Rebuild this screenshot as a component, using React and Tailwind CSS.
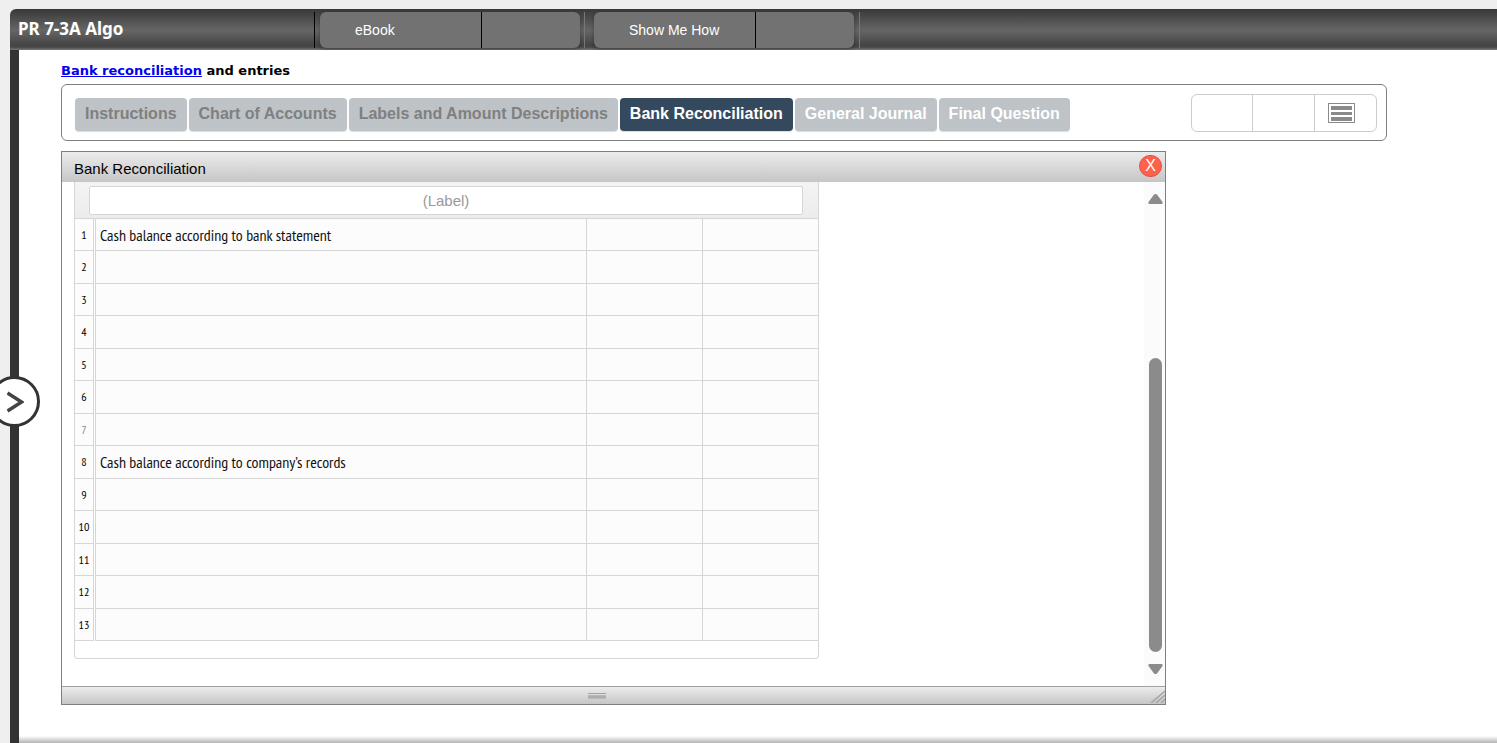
import React from "react";

const tabs = [
  { label: "Instructions", tone: "visited" },
  { label: "Chart of Accounts", tone: "visited" },
  { label: "Labels and Amount Descriptions", tone: "visited" },
  { label: "Bank Reconciliation", tone: "active" },
  { label: "General Journal", tone: "idle" },
  { label: "Final Question", tone: "idle" },
];

const tabTones = {
  visited: "bg-[#bdc3c7] text-[#7f8080]",
  active: "bg-[#34495e] text-white",
  idle: "bg-[#bdc3c7] text-white",
};

const rowText = {
  1: "Cash balance according to bank statement",
  8: "Cash balance according to company’s records",
};

const rows = Array.from({ length: 13 }, (_, i) => i + 1);

function HeaderButton({ label }) {
  return (
    <div className="flex h-9 w-[260px] overflow-hidden rounded-md bg-[#727272] shadow-[0_2px_4px_rgba(0,0,0,0.3)]">
      <button type="button" className="w-[161px] pl-[35px] text-left text-sm text-white">
        {label}
      </button>
      <span className="flex-1 border-l border-black" />
    </div>
  );
}

function TopBar() {
  return (
    <header className="ml-[10px] flex h-[41px] items-start rounded-tl-md bg-[linear-gradient(to_bottom,#383838_0%,#666666_52%,#444444_88%,#484848_93%,#777777_100%)] pt-[3px]">
      <h1 className="w-[304px] pl-2 font-['Noto_Sans',sans-serif] text-[17px] leading-[34px] font-bold text-white">
        PR 7-3A Algo
      </h1>
      <div className="flex h-9 border-l border-black pl-[5px]">
        <HeaderButton label="eBook" />
      </div>
      <div className="ml-1 flex h-9 border-x border-[#777777] pr-[5px] pl-[9px]">
        <HeaderButton label="Show Me How" />
      </div>
    </header>
  );
}

function ListIcon() {
  return (
    <svg width="28" height="22" viewBox="0 0 28 22" aria-hidden="true">
      <rect x="0.5" y="1.5" width="26" height="19" fill="#fff" stroke="#8a8a8a" />
      <path d="M3 4h21v4H3zM3 10h21v3H3zM3 15h21v4H3z" fill="#8a8a8a" />
    </svg>
  );
}

function TabBar() {
  return (
    <div className="mr-[110px] flex h-[57px] justify-between rounded-md border border-[#7f7f7f] pt-[9px] pr-[9px] pl-[13px]">
      <nav className="flex gap-[2px] pt-1">
        {tabs.map((t) => (
          <button
            key={t.label}
            type="button"
            className={`h-[33px] rounded px-[10px] pb-[2px] text-base font-bold whitespace-nowrap shadow-[0_1px_1px_rgba(0,0,0,0.15)] ${tabTones[t.tone]}`}
          >
            {t.label}
          </button>
        ))}
      </nav>
      <div className="grid h-[38px] w-[186px] grid-cols-3 divide-x divide-[#cccccc] rounded-md border border-[#cccccc]">
        <button type="button" aria-label="Previous view" />
        <button type="button" aria-label="Next view" />
        <button type="button" aria-label="List view" className="flex items-center justify-center pr-[6px]">
          <ListIcon />
        </button>
      </div>
    </div>
  );
}

function Ledger() {
  return (
    <div className="ml-3 w-[745px] overflow-hidden rounded-b border border-t-0 border-[#d6d6d6]">
      <div className="bg-linear-to-b from-[#f4f4f4] to-[#ececec] pt-1 pr-[15px] pb-[3px] pl-[14px]">
        <input
          aria-label="Label"
          placeholder="(Label)"
          className="block h-[29px] w-full rounded-xs border border-[#d6d6d6] bg-white text-center text-[15px] placeholder:text-[#999999] placeholder:opacity-100"
        />
      </div>
      <table className="w-full table-fixed border-separate border-spacing-0 border-t border-[#d6d6d6]">
        <colgroup>
          <col className="w-[19px]" />
          <col className="w-[2px]" />
          <col />
          <col className="w-[116px]" />
          <col className="w-[115px]" />
        </colgroup>
        <tbody>
          {rows.map((n) => (
            <tr key={n} className="h-8 even:h-[33px]">
              <th
                scope="row"
                className={`border-r border-b border-[#d6d6d6] bg-[#fcfcfc] p-0 text-center font-['PT_Sans_Narrow','Liberation_Sans_Narrow','Noto_Sans',sans-serif] text-xs font-normal ${n === 7 ? "text-[#888888]" : "text-black"}`}
              >
                {n}
              </th>
              <td className="border-r border-[#d6d6d6] p-0" />
              <td className="border-r border-b border-[#d6d6d6] bg-[#fcfcfc] py-0 pl-1 font-['PT_Sans_Narrow','Liberation_Sans_Narrow','Liberation_Sans',sans-serif] text-base leading-5 text-[#111111]">
                {rowText[n] || (
                  <input aria-label={`Description, row ${n}`} className="block h-5 w-full bg-transparent" />
                )}
              </td>
              <td className="border-r border-b border-[#d6d6d6] bg-[#fcfcfc] p-0">
                <input aria-label={`Amount, row ${n}`} className="block h-5 w-full bg-transparent" />
              </td>
              <td className="border-b border-[#d6d6d6] bg-[#fcfcfc] p-0">
                <input aria-label={`Total, row ${n}`} className="block h-5 w-full bg-transparent" />
              </td>
            </tr>
          ))}
        </tbody>
      </table>
      <div className="h-[17px]" />
    </div>
  );
}

function ScrollTrack() {
  return (
    <div className="flex w-[21px] flex-col items-end bg-[#fbfbfb] py-3 pr-[2px]" aria-hidden="true">
      <svg width="15" height="10" viewBox="0 0 15 10">
        <path d="M6 0.5Q7.5 -0.5 9 0.5L14.5 8Q15 10 13.5 10H1.5Q0 10 0.5 8Z" fill="#8b8b8b" />
      </svg>
      <div className="flex-1" />
      <div className="mr-px h-[294px] w-[13px] rounded-full bg-[#8b8b8b]" />
      <svg width="15" height="10" viewBox="0 0 15 10" className="mt-3">
        <path d="M6 9.5Q7.5 10.5 9 9.5L14.5 2Q15 0 13.5 0H1.5Q0 0 0.5 2Z" fill="#8b8b8b" />
      </svg>
    </div>
  );
}

function ReconciliationPanel() {
  return (
    <section className="mt-[10px] w-full max-w-[1105px] border border-[#7f7f7f]">
      <div className="flex h-[30px] items-start justify-between bg-linear-to-b from-[#ececec] to-[#c6c6c6] pr-[3px] pl-3">
        <h2 className="text-[15px] leading-[34px] text-black">Bank Reconciliation</h2>
        <button
          type="button"
          aria-label="Close"
          className="mt-[3px] h-[22px] w-[23px] rounded-full border border-[#e0524a] bg-[#ff614a] text-base leading-5 text-white"
        >
          X
        </button>
      </div>
      <div className="flex justify-between">
        <div className="pb-[27px]">
          <Ledger />
        </div>
        <ScrollTrack />
      </div>
      <div className="flex h-[18px] border-t border-[#a0a0a0] bg-linear-to-b from-[#ececec] to-[#c6c6c6]">
        <span className="flex-1" />
        <svg width="18" height="6" viewBox="0 0 18 6" className="mt-[6px] mr-[34px]" aria-hidden="true">
          <path d="M0 0h18v1H0z" fill="#a5a5a5" />
          <path d="M0 2h18v4H0z" fill="#b9b9b9" />
          <path d="M0 3h18v2H0z" fill="#aeaeae" />
        </svg>
        <span className="flex flex-1 justify-end pt-[3px]">
          <svg width="15" height="13" viewBox="0 0 15 13" fill="none" stroke="#a3a3a3" strokeWidth="1.5" aria-hidden="true">
            <path d="M1 13L15 1M6 13L15 5M11 13L15 9" />
          </svg>
        </span>
      </div>
    </section>
  );
}

export default function App() {
  return (
    <div className="relative flex min-h-screen flex-col overflow-hidden bg-[#efefef] pt-[9px] font-['Liberation_Sans',Arial,sans-serif] text-black">
      <TopBar />
      <main className="ml-[10px] flex flex-1 flex-col border-l-[9px] border-[#333333] bg-white">
        <div className="flex-1 pl-[42px]">
          <p className="h-[34px] pt-[10px] font-['DejaVu_Sans',Verdana,sans-serif] text-[13px] leading-[22px] font-bold">
            <a href="#reconciliation" className="text-[#0000ee] underline">
              Bank reconciliation
            </a>{" "}
            and entries
          </p>
          <TabBar />
          <ReconciliationPanel />
        </div>
        <div className="h-[7px] bg-linear-to-b from-white to-[#b4b4b4]" />
      </main>
      <button
        type="button"
        aria-label="Open side panel"
        className="absolute top-[376px] -left-[11px] flex h-[51px] w-[51px] items-center justify-center rounded-full border-[3px] border-[#333333] bg-white"
      >
        <svg width="17" height="22" viewBox="0 0 17 22" fill="none" stroke="#444444" strokeWidth="3.5" aria-hidden="true" className="ml-[2px]">
          <path d="M0.5 2L14.5 11L0.5 20" />
        </svg>
      </button>
    </div>
  );
}
